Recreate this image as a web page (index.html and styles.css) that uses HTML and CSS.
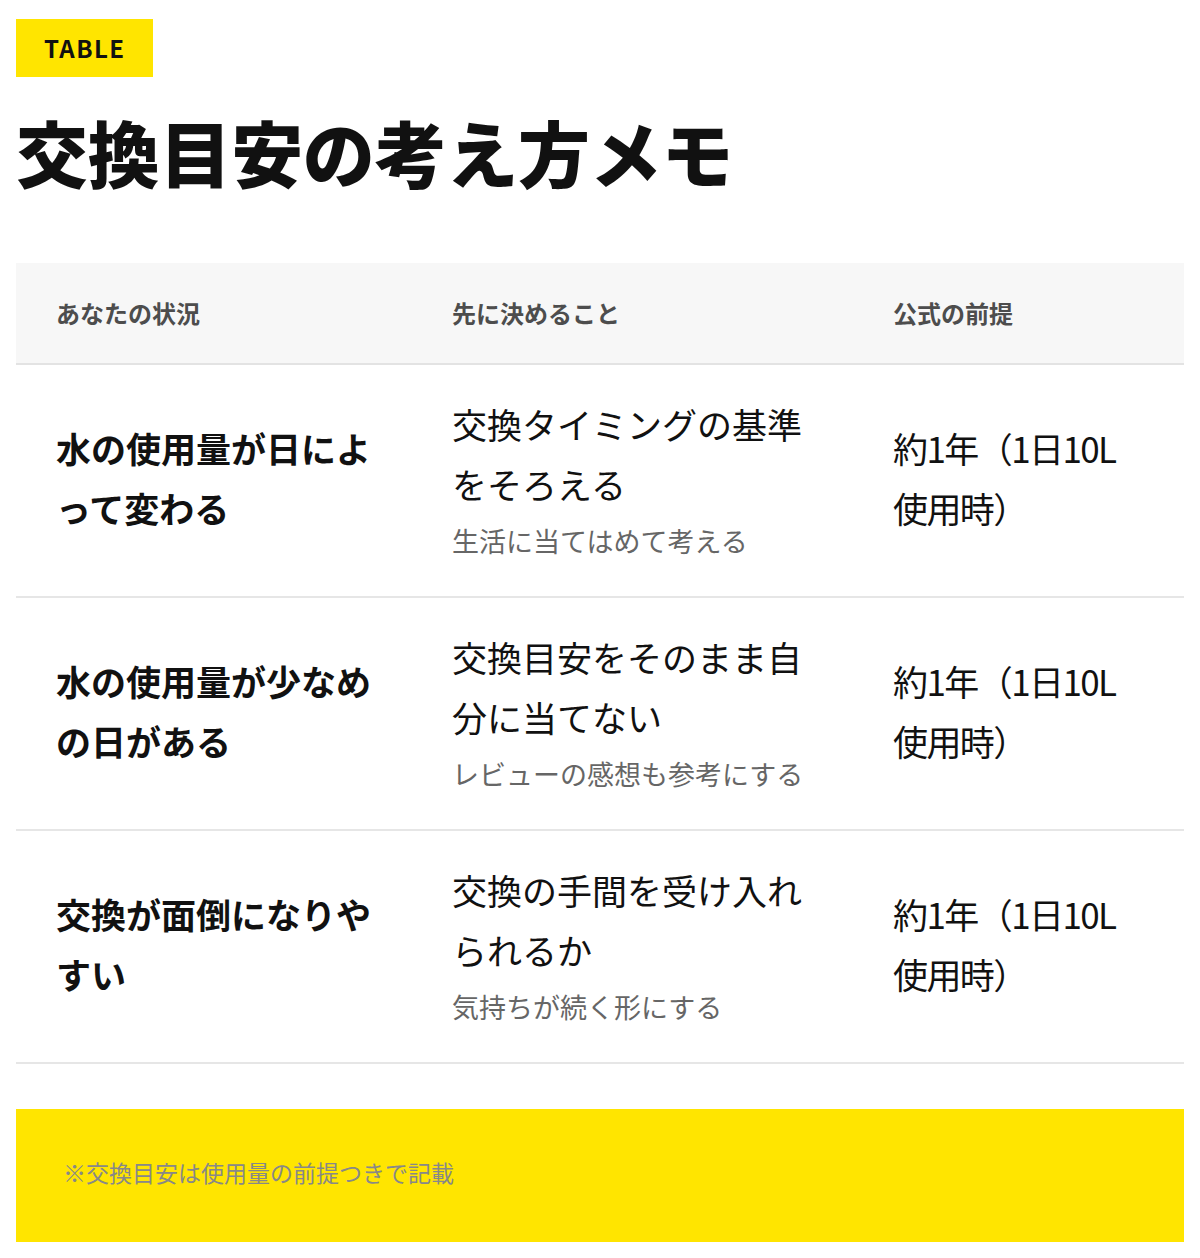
FILE: index.html
```html
<!DOCTYPE html>
<html lang="ja">
<head>
<meta charset="utf-8">
<link rel="stylesheet" href="styles.css">
</head>
<body>
<main class="page">
  <span class="badge">TABLE</span>
  <h1 class="title">交換目安の考え方メモ</h1>
  <table class="memo">
    <colgroup>
      <col class="c1"><col class="c2"><col class="c3">
    </colgroup>
    <thead>
      <tr><th>あなたの状況</th><th>先に決めること</th><th>公式の前提</th></tr>
    </thead>
    <tbody>
      <tr>
        <td class="situ">水の使用量が日によって変わる</td>
        <td class="todo">交換タイミングの基準をそろえる<span class="sub">生活に当てはめて考える</span></td>
        <td class="base">約1年（1日10L使用時）</td>
      </tr>
      <tr>
        <td class="situ">水の使用量が少なめの日がある</td>
        <td class="todo">交換目安をそのまま自分に当てない<span class="sub">レビューの感想も参考にする</span></td>
        <td class="base">約1年（1日10L使用時）</td>
      </tr>
      <tr>
        <td class="situ">交換が面倒になりやすい</td>
        <td class="todo">交換の手間を受け入れられるか<span class="sub">気持ちが続く形にする</span></td>
        <td class="base">約1年（1日10L使用時）</td>
      </tr>
    </tbody>
  </table>
  <p class="note">※交換目安は使用量の前提つきで記載</p>
</main>
</body>
</html>
```
FILE: styles.css
```css
* { box-sizing: border-box; }
body {
  margin: 0;
  background: #fff;
  color: #111;
  font-family: "Noto Sans CJK JP", "Noto Sans", sans-serif;
}
.page {
  padding: 19px 16px 16px;
}
.badge {
  display: inline-block;
  background: #ffe500;
  color: #111;
  font-weight: 700;
  font-size: 24px;
  letter-spacing: 0.06em;
  line-height: 58px;
  padding: 0 28px;
}
.title {
  margin: 24px 0 61px;
  font-size: 72px;
  font-weight: 900;
  line-height: 1.4;
  letter-spacing: -0.004em;
}
.memo {
  width: 100%;
  border-collapse: collapse;
  table-layout: fixed;
}
.c1 { width: 396px; }
.c2 { width: 441px; }
.c3 { width: 331px; }
.memo th {
  background: #f7f7f7;
  text-align: left;
  font-size: 24px;
  font-weight: 700;
  color: #4d4d4d;
  line-height: 36px;
  padding: 32px 20px 32px 40px;
  border-bottom: 2px solid #e3e3e3;
}
.memo td {
  vertical-align: middle;
  padding: 29px 20px 33px 40px;
  font-size: 35px;
  line-height: 60px;
  border-bottom: 2px solid #e6e6e6;
}
.memo td.base {
  padding-right: 40px;
  letter-spacing: -0.045em;
}
.situ { font-weight: 700; }
.todo { font-weight: 400; }
.base { font-weight: 400; }
.sub {
  display: block;
  font-size: 27px;
  line-height: 45px;
  margin-top: 4px;
  color: #666;
}
.note {
  margin: 45px 0 0;
  background: #ffe500;
  color: #888;
  font-size: 23px;
  line-height: 36px;
  padding: 45px 47px 52px;
}
```
